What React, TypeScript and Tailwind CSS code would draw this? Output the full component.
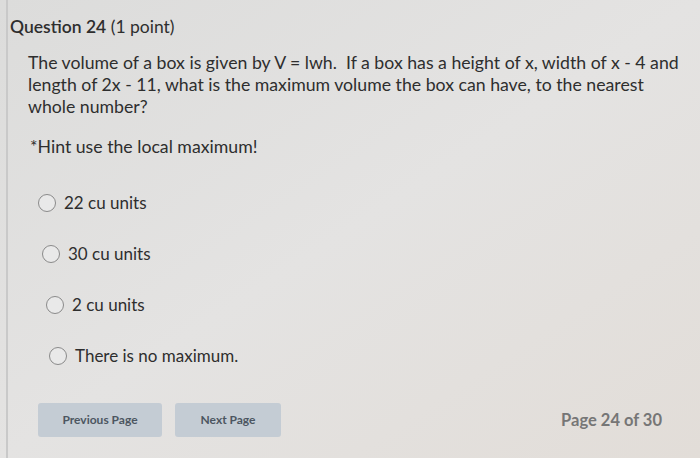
const options = [
  { label: '22 cu units', pad: 'pl-[30px]' },
  { label: '30 cu units', pad: 'pl-[34px]' },
  { label: '2 cu units', pad: 'pl-[38px]' },
  { label: 'There is no maximum.', pad: 'pl-[41px]' },
]

export default function App() {
  return (
    <div
      className="w-[700px] h-[458px] overflow-hidden bg-gradient-to-br from-[#dcdcdb] via-[#e4e3e2] to-[#e2ddd8] text-[#2e2e2e]"
      style={{ fontFamily: 'Lato, "Open Sans", sans-serif' }}
    >
      <div className="h-full ml-[6px] border-l-2 border-[#c9c9c9]">
        {/* Header */}
        <div className="pt-[16px] pl-[2px] text-[17.5px] leading-[22px]">
          <span className="font-semibold">Question 24</span> <span>(1 point)</span>
        </div>

        {/* Question text */}
        <div className="pl-[20px] pr-[8px] pt-[14px] text-[17.7px] leading-[22px]">
          <p>
            The volume of a box is given by V = lwh.&nbsp; If a box has a height of x, width of x - 4 and
            <br />
            length of 2x - 11, what is the maximum volume the box can have, to the nearest
            <br />
            whole number?
          </p>
          <p className="pt-[18px] pl-[2px]">*Hint use the local maximum!</p>
        </div>

        {/* Answer options */}
        <div className="pt-[34px] flex flex-col gap-[29px]">
          {options.map((o) => (
            <label key={o.label} className={`flex items-center gap-[8px] text-[17px] leading-[22px] ${o.pad}`}>
              <span className="w-[18px] h-[18px] rounded-full border border-[#8a8a8a] bg-[#e9e9e9]"></span>
              <span>{o.label}</span>
            </label>
          ))}
        </div>

        {/* Footer */}
        <div className="pt-[36px] pl-[30px] pr-[38px] flex items-center">
          <button className="w-[124px] h-[34px] rounded-[3px] bg-[#c4ccd4] text-[12px] font-bold text-[#4c5661]">
            Previous Page
          </button>
          <button className="ml-[13px] w-[106px] h-[34px] rounded-[3px] bg-[#c4ccd4] text-[12px] font-bold text-[#4c5661]">
            Next Page
          </button>
          <div className="ml-auto text-[16.5px] font-bold text-[#767676]">Page 24 of 30</div>
        </div>
      </div>
    </div>
  )
}
